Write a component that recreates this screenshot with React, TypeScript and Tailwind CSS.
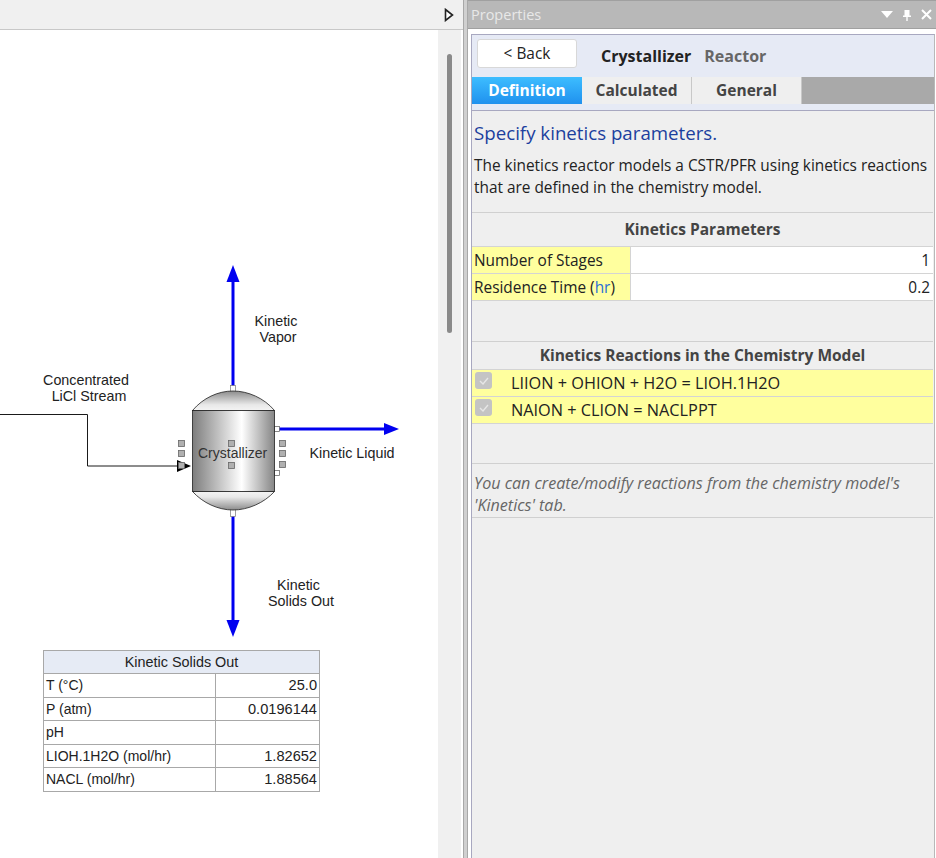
const sans = "font-['Segoe_UI','Open_Sans','Noto_Sans',sans-serif]";

const nubs = [
  [178, 440], [178, 450], [178, 462],
  [228, 440], [228, 462],
  [279, 440], [279, 450], [279, 461],
];

const streamRows = [
  ["T (°C)", "25.0"],
  ["P (atm)", "0.0196144"],
  ["pH", ""],
  ["LIOH.1H2O (mol/hr)", "1.82652"],
  ["NACL (mol/hr)", "1.88564"],
];

function FlowsheetDrawing() {
  return (
    <svg className="absolute left-0 top-0" width="438" height="828" viewBox="0 30 438 828">
      <defs>
        <linearGradient id="shell" x1="0" x2="1" y1="0" y2="0">
          <stop offset="0" stopColor="#7d7d7d" />
          <stop offset="0.6" stopColor="#ffffff" />
          <stop offset="1" stopColor="#858585" />
        </linearGradient>
        <linearGradient id="topHead" x1="0" x2="0" y1="0" y2="1">
          <stop offset="0" stopColor="#8c8c8c" />
          <stop offset="0.7" stopColor="#e8e8e8" />
          <stop offset="1" stopColor="#f4f4f4" />
        </linearGradient>
        <linearGradient id="bottomHead" x1="0" x2="0" y1="1" y2="0">
          <stop offset="0" stopColor="#8c8c8c" />
          <stop offset="0.7" stopColor="#e8e8e8" />
          <stop offset="1" stopColor="#f4f4f4" />
        </linearGradient>
      </defs>

      {/* feed */}
      <path d="M0 414.5H87.5V466H180" fill="none" stroke="#1a1a1a" strokeWidth="1" />
      <path d="M177 460L191 466L177 472Z" fill="#000" />

      {/* outlet streams */}
      <path d="M233 386V278" stroke="#0000f0" strokeWidth="3" />
      <path d="M233 265L239.5 282H226.5Z" fill="#0000f0" />
      <path d="M278 429H388" stroke="#0000f0" strokeWidth="3" />
      <path d="M399 429L384 423V435Z" fill="#0000f0" />
      <path d="M233 516V626" stroke="#0000f0" strokeWidth="3" />
      <path d="M233 637L226.5 620H239.5Z" fill="#0000f0" />

      {/* nozzles */}
      <rect x="230.5" y="385.5" width="5" height="8" fill="#fff" stroke="#777" strokeWidth="0.7" />
      <rect x="230.5" y="508.5" width="5" height="8" fill="#fff" stroke="#777" strokeWidth="0.7" />
      <rect x="274.5" y="426.5" width="5" height="5" fill="#fff" stroke="#555" strokeWidth="0.7" />
      <rect x="274.5" y="470.5" width="5" height="5" fill="#fff" stroke="#555" strokeWidth="0.7" />

      {/* vessel */}
      <path d="M192.5 410.5C203 398 218 391 233 391C248 391 264 398 274.5 410.5Z" fill="url(#topHead)" stroke="#222" strokeWidth="0.8" />
      <path d="M192.5 491.5C203 503 218 510 233 510C248 510 264 503 274.5 491.5Z" fill="url(#bottomHead)" stroke="#222" strokeWidth="0.8" />
      <rect x="192.5" y="410.5" width="82" height="81" fill="url(#shell)" stroke="#222" strokeWidth="0.8" />

      {/* connection handles */}
      {nubs.map(([x, y]) => (
        <rect key={`${x}-${y}`} x={x + 0.5} y={y + 0.5} width="6" height="6" fill="#b0b0b0" stroke="#666" strokeWidth="0.8" />
      ))}
    </svg>
  );
}

function Label({ className, children }: { className: string; children: React.ReactNode }) {
  return (
    <div className={`absolute text-center text-[14.3px] leading-[16px] text-[#222] font-['Liberation_Sans',sans-serif] ${className}`}>
      {children}
    </div>
  );
}

function StreamTable() {
  return (
    <div className="absolute left-[43px] top-[620px] w-[277px] border border-[#a8a8a8] bg-white font-['Liberation_Sans',sans-serif] text-[14px] text-[#222]">
      <div className="h-[22px] bg-[#e6ebf5] text-center text-[14.4px] leading-[22px]">Kinetic Solids Out</div>
      {streamRows.map(([name, value]) => (
        <div key={name} className="flex h-[23.6px] border-t border-[#a8a8a8] leading-[22px]">
          <div className="w-[172px] border-r border-[#a8a8a8] pl-[2px]">{name}</div>
          <div className="flex-1 pr-[2px] text-right text-[14.6px]">{value}</div>
        </div>
      ))}
    </div>
  );
}

function LeftPane() {
  return (
    <div className="flex h-full w-[463px] shrink-0 flex-col bg-white">
      <div className="flex h-[30px] shrink-0 items-center justify-end border-b border-[#c8c8c8] bg-[#f0f0f0] pr-[9px]">
        <svg width="10" height="14" viewBox="0 0 10 14">
          <path d="M1.5 1.5L8.5 7L1.5 12.5Z" fill="#fff" stroke="#222" strokeWidth="1.6" />
        </svg>
      </div>
      <div className="flex flex-1">
        <div className="relative h-full w-[438px]">
          <FlowsheetDrawing />
          <Label className="left-[236px] top-[283px] w-[80px]">Kinetic<br /><span className="ml-[4px]">Vapor</span></Label>
          <Label className="left-[26px] top-[342px] w-[120px]">Concentrated<br /><span className="ml-[6px]">LiCl Stream</span></Label>
          <div className="absolute left-[198px] top-[415px] text-[14px] leading-[16px] text-[#333] font-['Liberation_Sans',sans-serif]">Crystallizer</div>
          <Label className="left-[302px] top-[415px] w-[100px]">Kinetic Liquid</Label>
          <Label className="left-[261px] top-[547px] w-[80px]"><span className="mr-[5px]">Kinetic</span><br />Solids Out</Label>
          <StreamTable />
        </div>
        <div className="w-[23px] bg-[#f0f0f0] pl-[9px] pt-[24px]">
          <div className="h-[279px] w-[5px] rounded-full bg-[#8a8a8a]" />
        </div>
        <div className="w-[2px] bg-white" />
      </div>
    </div>
  );
}

function TitleBar() {
  return (
    <div className="flex h-[29px] shrink-0 items-center justify-between border-y border-[#a0a0a0] bg-[#b8b8b8] pl-[3px] pr-[4px]">
      <span className="text-[14.5px] text-[#e8e8e8]">Properties</span>
      <div className="flex items-center gap-[9px]">
        <svg width="12" height="7" viewBox="0 0 12 7"><path d="M0 0H12L6 7Z" fill="#fff" /></svg>
        <svg width="10" height="12" viewBox="0 0 10 12">
          <path d="M2.5 1H7.5V6.5H9V8H5.7V12H4.3V8H1V6.5H2.5Z" fill="#fff" />
        </svg>
        <svg width="11" height="11" viewBox="0 0 11 11"><path d="M1 1L10 10M10 1L1 10" stroke="#fff" strokeWidth="2" /></svg>
      </div>
    </div>
  );
}

function Tab({ label, active }: { label: string; active?: boolean }) {
  if (active) {
    return (
      <div className="flex w-[110px] items-center justify-center bg-gradient-to-b from-[#3dbdff] to-[#2091ee] pt-[1px] text-[15.5px] font-bold text-white">
        {label}
      </div>
    );
  }
  return (
    <div className="flex w-[110px] items-center justify-center border-r border-[#c8c8c8] bg-[#efefef] pt-[1px] text-[15.5px] font-bold text-[#444]">
      {label}
    </div>
  );
}

function ParamRow({ children, value }: { children: React.ReactNode; value: string }) {
  return (
    <div className="flex h-[27px] border-b border-[#d4d4d4]">
      <div className="flex w-[158px] items-center bg-[#ffff9e] pl-[2px] pt-[1px] text-[#222]">{children}</div>
      <div className="flex flex-1 items-center justify-end border-l border-[#d4d4d4] bg-white pr-[3px] pt-[1px] text-[#222]">{value}</div>
    </div>
  );
}

function ReactionRow({ text }: { text: string }) {
  return (
    <div className="flex h-[27px] items-center border-b border-[#d4d4d4] bg-[#ffff9e] pl-[39px] text-[16.3px] text-[#222]">
      <div className="absolute left-[3px] mt-[-5px] flex h-[17px] w-[17px] items-center justify-center rounded-[3px] bg-[#c4c4c4]">
        <svg width="10" height="8" viewBox="0 0 10 8"><path d="M1 4L4 7L9 1" fill="none" stroke="#e6e6e6" strokeWidth="1.4" /></svg>
      </div>
      {text}
    </div>
  );
}

function PropertiesPane() {
  return (
    <div className={`flex h-full flex-1 flex-col ${sans} text-[15.4px]`}>
      <TitleBar />
      <div className="flex flex-1 flex-col pl-[3px] pr-[1px] pt-[5px]">
        <div className="flex flex-1 flex-col border-l border-r border-t border-l-[#a8a8c0] border-r-[#b8b8b8] border-t-[#a8a8c0] bg-[#efefef]">
          <div className="flex h-[42px] shrink-0 items-start bg-[#e6eaf5] pl-[5px] pt-[4px]">
            <div className="flex h-[29px] w-[100px] items-center justify-center rounded-[3px] border border-[#d8d8d8] bg-white pt-[1px] text-[#222]">
              &lt; Back
            </div>
            <span className="ml-[24px] mt-[5px] text-[16px] font-bold text-[#222]">Crystallizer</span>
            <span className="ml-[13px] mt-[5px] text-[16px] font-bold text-[#666]">Reactor</span>
          </div>
          <div className="flex h-[27px] shrink-0 bg-[#a9a9a9]">
            <Tab label="Definition" active />
            <Tab label="Calculated" />
            <Tab label="General" />
          </div>
          <div className="h-[7px] shrink-0 border-b border-[#a8a8c0] bg-[#e6eaf5]" />
          <div className="relative flex flex-1 flex-col mr-[1px]">
            <div className="h-[102px] border-b border-[#d0d0d0] px-[2px] pt-[8px]">
              <div className="text-[18.7px] leading-[28px] text-[#1c3f9e]">Specify kinetics parameters.</div>
              <div className="mt-[8px] leading-[22px] text-[#222]">
                The kinetics reactor models a CSTR/PFR using kinetics reactions that are defined in the chemistry model.
              </div>
            </div>
            <div className="flex h-[34px] items-center justify-center border-b border-[#d4d4d4] pt-[1px] text-[15.5px] font-bold text-[#444]">
              Kinetics Parameters
            </div>
            <ParamRow value="1">Number of Stages</ParamRow>
            <ParamRow value="0.2">
              Residence Time (<span className="text-[#2a6fd6]">hr</span>)
            </ParamRow>
            <div className="h-[41px] border-b border-[#d0d0d0]" />
            <div className="flex h-[28px] items-center justify-center border-b border-[#d4d4d4] text-[15.5px] font-bold text-[#444]">
              Kinetics Reactions in the Chemistry Model
            </div>
            <ReactionRow text="LIION + OHION + H2O = LIOH.1H2O" />
            <ReactionRow text="NAION + CLION = NACLPPT" />
            <div className="h-[40px] border-b border-[#d0d0d0]" />
            <div className="h-[54px] border-b border-[#d0d0d0] px-[2px] pt-[8px] text-[16.1px] italic leading-[22px] text-[#666]">
              You can create/modify reactions from the chemistry model's 'Kinetics' tab.
            </div>
          </div>
        </div>
      </div>
    </div>
  );
}

export default function App() {
  return (
    <div className="flex h-[858px] w-[936px] overflow-hidden bg-white">
      <LeftPane />
      <div className="flex h-full w-[5px] shrink-0 bg-[#d0d0d0]">
        <div className="h-full w-[1px] bg-[#a8a8a8]" />
        <div className="ml-[3px] h-full w-[1px] bg-[#a8a8a8]" />
      </div>
      <PropertiesPane />
    </div>
  );
}
